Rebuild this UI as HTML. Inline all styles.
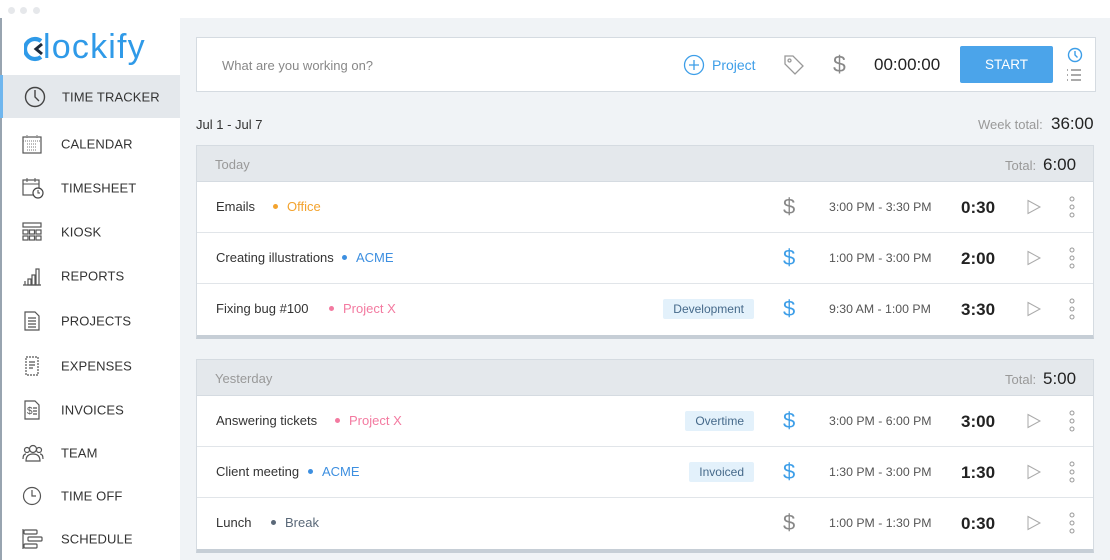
<!DOCTYPE html>
<html><head><meta charset="utf-8"><style>
*{margin:0;padding:0;box-sizing:border-box}
body{width:1110px;height:560px;overflow:hidden;background:#fff;font-family:"Liberation Sans",sans-serif;position:relative;color:#333}
.abs{position:absolute}
.dot{position:absolute;top:7px;width:7px;height:7px;border-radius:50%;background:#e6e8eb}
#side{position:absolute;left:0;top:18px;width:180px;height:542px;background:#fff;border-left:2px solid #98a4b0}
.nav{position:absolute;left:0;width:178px;height:43px;font-size:13px;color:#333;letter-spacing:.1px}
.nav span{position:absolute;left:59px;top:50%;transform:translateY(-50%)}
.nav svg{position:absolute;left:20px;top:50%;transform:translateY(-50%)}
#main{position:absolute;left:180px;top:18px;width:930px;height:542px;background:#f0f3f6}
.card{position:absolute;left:196px;width:898px;background:#fff;border:1px solid #d5dbe1;border-bottom:4px solid #c6ced6}
.hdr{height:36px;background:#e4e8ec;border-bottom:1px solid #d5dbe1;position:relative;font-size:13px;color:#999}
.row{height:51px;border-bottom:1px solid #e1e5e9;position:relative;font-size:13px}
.row:last-child{border-bottom:none}
.desc{position:absolute;left:19px;top:17px;color:#333}
.proj{position:absolute;top:17px}
.proj:before{content:"";display:inline-block;width:5px;height:5px;border-radius:50%;background:currentColor;margin-right:9px;vertical-align:2px}
.tag{position:absolute;right:339px;top:15px;height:20px;line-height:20px;padding:0 10px;background:#e3f1fb;color:#45698a;font-size:12px;border-radius:2px}
.usd{position:absolute;left:586px;top:12px;font-size:22px}
.rng{position:absolute;left:632px;top:18px;color:#555;font-size:12.3px}
.dur{position:absolute;left:764px;top:16px;font-size:17px;font-weight:bold;color:#222}
.play{position:absolute;left:829px;top:17px}
.more{position:absolute;left:872px;top:14px}
</style></head><body>
<div class="dot" style="left:8px"></div><div class="dot" style="left:20px"></div><div class="dot" style="left:33px"></div>
<div id="side">
<div class="abs" style="left:41px;top:10px;font-size:34px;color:#2f9ae8;letter-spacing:1.2px">lockify</div>
<svg class="abs" style="left:22px;top:18px" width="22" height="26" viewBox="0 0 22 26"><path d="M17 5 A10 10 0 1 0 17 21" fill="none" stroke="#2f9ae8" stroke-width="4.2"/><path d="M18 8 L12 13 L18 18" fill="none" stroke="#1d2a3a" stroke-width="3"/></svg>
<div class="nav" style="top:57px;background:#e4e8ec;border-left:3px solid #6fb6ee;left:-2px;width:180px"><svg width="22" height="22" viewBox="0 0 22 22" style="left:21px"><circle cx="11" cy="11" r="9.5" fill="none" stroke="#444" stroke-width="1.4"/><path d="M11 4v7l4 4" fill="none" stroke="#444" stroke-width="1.4"/></svg><span style="left:59px">TIME TRACKER</span></div>
<div class="nav" style="top:104px"><svg width="20" height="20" viewBox="0 0 20 20"><rect x="1" y="3" width="18" height="16" fill="none" stroke="#555" stroke-width="1.2"/><path d="M1 7h18M5 1v4M15 1v4M5 10h10M5 13h10M5 16h10" stroke="#777" stroke-width="1" stroke-dasharray="1 1"/></svg><span>CALENDAR</span></div>
<div class="nav" style="top:148px"><svg width="22" height="22" viewBox="0 0 22 22"><rect x="1" y="3" width="16" height="15" fill="none" stroke="#555" stroke-width="1.2"/><path d="M1 7h16M5 1v4M13 1v4" stroke="#555"/><circle cx="16" cy="16" r="5" fill="#fff" stroke="#444" stroke-width="1.2"/><path d="M16 13v3h2" fill="none" stroke="#444"/></svg><span>TIMESHEET</span></div>
<div class="nav" style="top:192px"><svg width="20" height="20" viewBox="0 0 20 20" fill="none" stroke="#555" stroke-width="1.2"><rect x="1" y="1" width="18" height="4"/><rect x="1" y="8" width="5" height="4"/><rect x="7.5" y="8" width="5" height="4"/><rect x="14" y="8" width="5" height="4"/><rect x="1" y="14" width="5" height="4"/><rect x="7.5" y="14" width="5" height="4"/><rect x="14" y="14" width="5" height="4"/></svg><span>KIOSK</span></div>
<div class="nav" style="top:236px"><svg width="20" height="20" viewBox="0 0 20 20" fill="none" stroke="#555" stroke-width="1.2"><path d="M1 19h18M3 19v-4"/><rect x="6" y="13" width="3" height="6"/><rect x="10" y="9" width="3" height="10"/><rect x="14" y="3" width="3" height="16"/></svg><span>REPORTS</span></div>
<div class="nav" style="top:281px"><svg width="20" height="20" viewBox="0 0 20 20" fill="none" stroke="#555" stroke-width="1.2"><path d="M3 1h10l4 4v14H3z"/><path d="M6 7h8M6 10h8M6 13h8M6 16h8"/></svg><span>PROJECTS</span></div>
<div class="nav" style="top:326px"><svg width="20" height="20" viewBox="0 0 20 20" fill="none" stroke="#555" stroke-width="1.2"><path d="M4 1h12v18H4z" stroke-dasharray="2 1"/><path d="M7 6h6M7 9h6M7 12h4"/></svg><span>EXPENSES</span></div>
<div class="nav" style="top:370px"><svg width="20" height="20" viewBox="0 0 20 20" fill="none" stroke="#555" stroke-width="1.2"><path d="M3 1h10l4 4v14H3z"/><text x="5" y="14" font-size="10" fill="#555" stroke="none">$</text><path d="M11 8h4M11 11h4M11 14h4"/></svg><span>INVOICES</span></div>
<div class="nav" style="top:413px"><svg width="22" height="20" viewBox="0 0 22 20" fill="none" stroke="#555" stroke-width="1.2"><circle cx="11" cy="6" r="3.5"/><path d="M4 18c0-5 3-7 7-7s7 2 7 7z"/><circle cx="5" cy="7" r="2.5"/><circle cx="17" cy="7" r="2.5"/><path d="M1 16c0-3 1-5 3-5M21 16c0-3-1-5-3-5"/></svg><span>TEAM</span></div>
<div class="nav" style="top:456px"><svg width="20" height="20" viewBox="0 0 20 20" fill="none" stroke="#555" stroke-width="1.2"><circle cx="10" cy="10" r="8.5"/><path d="M10 4v6h4"/></svg><span>TIME OFF</span></div>
<div class="nav" style="top:499px"><svg width="22" height="20" viewBox="0 0 22 20" fill="none" stroke="#555" stroke-width="1.2"><rect x="2" y="1" width="13" height="4" rx="1"/><rect x="6" y="8" width="14" height="4" rx="1"/><rect x="2" y="15" width="13" height="4" rx="1"/><path d="M1 0v20"/></svg><span>SCHEDULE</span></div>
</div>
<div id="main"></div>
<div class="abs" style="left:196px;top:37px;width:900px;height:55px;background:#fff;border:1px solid #d5dbe1">
<div class="abs" style="left:25px;top:20px;font-size:13px;color:#888">What are you working on?</div>
<svg class="abs" style="left:486px;top:16px" width="22" height="22" viewBox="0 0 22 22" fill="none" stroke="#3d9ee8" stroke-width="1.3"><circle cx="11" cy="11" r="9.5"/><path d="M11 6v10M6 11h10"/></svg>
<div class="abs" style="left:515px;top:19px;font-size:14px;color:#3d9ee8">Project</div>
<svg class="abs" style="left:586px;top:16px" width="22" height="22" viewBox="0 0 22 22" fill="none" stroke="#999" stroke-width="1.3"><path d="M2 2h8l10 10-8 8L2 10z"/><circle cx="6.5" cy="6.5" r="1.5"/></svg>
<div class="abs" style="left:636px;top:13px;font-size:23px;color:#888">$</div>
<div class="abs" style="left:677px;top:17px;font-size:17px;color:#222">00:00:00</div>
<div class="abs" style="left:763px;top:8px;width:93px;height:37px;background:#4ba4ea;border-radius:2px;color:#fff;font-size:13.5px;text-align:center;line-height:37px">START</div>
<svg class="abs" style="left:870px;top:9px" width="16" height="16" viewBox="0 0 16 16" fill="none" stroke="#3d9ee8" stroke-width="1.4"><circle cx="8" cy="8" r="6.5"/><path d="M8 4v4l2.5 2.5"/></svg>
<svg class="abs" style="left:869px;top:30px" width="16" height="14" viewBox="0 0 16 14" stroke="#777" stroke-width="1.2"><path d="M1 2h1M5 2h10M1 7h1M5 7h10M1 12h1M5 12h10"/></svg>
</div>
<div class="abs" style="left:196px;top:117px;font-size:13px;color:#333">Jul 1 - Jul 7</div>
<div class="abs" style="left:978px;top:117px;font-size:13px;color:#999">Week total:</div>
<div class="abs" style="left:1051px;top:114px;font-size:17px;color:#222">36:00</div>

<div class="card" style="top:145px">
<div class="hdr"><span class="abs" style="left:18px;top:11px">Today</span><span class="abs" style="left:808px;top:12px">Total:</span><span class="abs" style="left:846px;top:9px;font-size:17px;color:#222">6:00</span></div>
<div class="row"><span class="desc">Emails</span><span class="proj" style="left:76px;color:#f3a32e">Office</span><span class="usd" style="color:#888">$</span><span class="rng">3:00 PM - 3:30 PM</span><span class="dur">0:30</span>
<svg class="play" width="16" height="16" viewBox="0 0 16 16"><path d="M2 1.5l12 6.5-12 6.5z" fill="none" stroke="#aaa"/></svg><svg class="more" width="6" height="22" viewBox="0 0 6 22" fill="none" stroke="#999"><circle cx="3" cy="3" r="2"/><circle cx="3" cy="11" r="2"/><circle cx="3" cy="19" r="2"/></svg></div>
<div class="row"><span class="desc">Creating illustrations</span><span class="proj" style="left:145px;color:#3d8fe0">ACME</span><span class="usd" style="color:#3d9ee8">$</span><span class="rng">1:00 PM - 3:00 PM</span><span class="dur">2:00</span>
<svg class="play" width="16" height="16" viewBox="0 0 16 16"><path d="M2 1.5l12 6.5-12 6.5z" fill="none" stroke="#aaa"/></svg><svg class="more" width="6" height="22" viewBox="0 0 6 22" fill="none" stroke="#999"><circle cx="3" cy="3" r="2"/><circle cx="3" cy="11" r="2"/><circle cx="3" cy="19" r="2"/></svg></div>
<div class="row"><span class="desc">Fixing bug #100</span><span class="proj" style="left:132px;color:#f37aa0">Project X</span><span class="tag">Development</span><span class="usd" style="color:#3d9ee8">$</span><span class="rng">9:30 AM - 1:00 PM</span><span class="dur">3:30</span>
<svg class="play" width="16" height="16" viewBox="0 0 16 16"><path d="M2 1.5l12 6.5-12 6.5z" fill="none" stroke="#aaa"/></svg><svg class="more" width="6" height="22" viewBox="0 0 6 22" fill="none" stroke="#999"><circle cx="3" cy="3" r="2"/><circle cx="3" cy="11" r="2"/><circle cx="3" cy="19" r="2"/></svg></div>
</div>

<div class="card" style="top:359px">
<div class="hdr"><span class="abs" style="left:18px;top:11px">Yesterday</span><span class="abs" style="left:808px;top:12px">Total:</span><span class="abs" style="left:846px;top:9px;font-size:17px;color:#222">5:00</span></div>
<div class="row"><span class="desc">Answering tickets</span><span class="proj" style="left:138px;color:#f37aa0">Project X</span><span class="tag">Overtime</span><span class="usd" style="color:#3d9ee8">$</span><span class="rng">3:00 PM - 6:00 PM</span><span class="dur">3:00</span>
<svg class="play" width="16" height="16" viewBox="0 0 16 16"><path d="M2 1.5l12 6.5-12 6.5z" fill="none" stroke="#aaa"/></svg><svg class="more" width="6" height="22" viewBox="0 0 6 22" fill="none" stroke="#999"><circle cx="3" cy="3" r="2"/><circle cx="3" cy="11" r="2"/><circle cx="3" cy="19" r="2"/></svg></div>
<div class="row"><span class="desc">Client meeting</span><span class="proj" style="left:111px;color:#3d8fe0">ACME</span><span class="tag">Invoiced</span><span class="usd" style="color:#3d9ee8">$</span><span class="rng">1:30 PM - 3:00 PM</span><span class="dur">1:30</span>
<svg class="play" width="16" height="16" viewBox="0 0 16 16"><path d="M2 1.5l12 6.5-12 6.5z" fill="none" stroke="#aaa"/></svg><svg class="more" width="6" height="22" viewBox="0 0 6 22" fill="none" stroke="#999"><circle cx="3" cy="3" r="2"/><circle cx="3" cy="11" r="2"/><circle cx="3" cy="19" r="2"/></svg></div>
<div class="row"><span class="desc">Lunch</span><span class="proj" style="left:74px;color:#5a6878">Break</span><span class="usd" style="color:#888">$</span><span class="rng">1:00 PM - 1:30 PM</span><span class="dur">0:30</span>
<svg class="play" width="16" height="16" viewBox="0 0 16 16"><path d="M2 1.5l12 6.5-12 6.5z" fill="none" stroke="#aaa"/></svg><svg class="more" width="6" height="22" viewBox="0 0 6 22" fill="none" stroke="#999"><circle cx="3" cy="3" r="2"/><circle cx="3" cy="11" r="2"/><circle cx="3" cy="19" r="2"/></svg></div>
</div>
</body></html>
